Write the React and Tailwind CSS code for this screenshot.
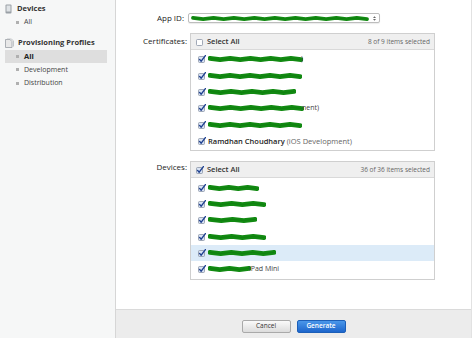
import React from "react";

const font = { fontFamily: '"Open Sans", "DejaVu Sans", sans-serif' };

function Scribble({ w, h = 6 }) {
  const pts = [];
  const n = Math.max(4, Math.floor(w / 10));
  for (let i = 0; i <= n; i++) {
    const x = 2 + ((w - 4) * i) / n;
    const y = h / 2 + (i % 2 === 0 ? -0.6 : 0.6);
    pts.push(`${x.toFixed(1)},${y.toFixed(1)}`);
  }
  return (
    <svg width={w} height={h} viewBox={`0 0 ${w} ${h}`} className="block">
      <polyline points={pts.join(" ")} fill="none" stroke="#128a12" strokeWidth={h - 1.2} strokeLinecap="round" strokeLinejoin="round" />
      <polyline points={pts.join(" ")} fill="none" stroke="#0b7a0b" strokeWidth={1} strokeLinecap="round" opacity="0.6" />
    </svg>
  );
}

function Check({ checked }) {
  return (
    <svg width="8" height="8" viewBox="0 0 8 8" className="block shrink-0">
      <rect x="0.5" y="1.5" width="6" height="6" rx="1" fill={checked ? "#d9e3f3" : "#fff"} stroke="#8a94a6" strokeWidth="0.8" />
      {checked && <path d="M1.6 4.4 L3.2 6.2 L7.4 0.6" fill="none" stroke="#1d3f8f" strokeWidth="1.4" strokeLinecap="round" strokeLinejoin="round" />}
    </svg>
  );
}

function Row({ scribble, text, pre, highlight }) {
  return (
    <div className={`h-[16.4px] flex items-center pl-[7px] ${highlight ? "bg-[#dcebf8]" : ""}`}>
      <Check checked />
      <div className="relative ml-[2px] flex items-center h-full">
        {pre ? (
          <span className="text-[7.5px] text-[#222]">{pre}</span>
        ) : (
          <>
            <Scribble w={scribble} />
            {text && <span className="text-[7px] text-[#444] -ml-[2px]">{text}</span>}
          </>
        )}
      </div>
    </div>
  );
}

function ListBox({ checked, count, rows }) {
  return (
    <div className="w-[245px] border border-[#cfcfcf] bg-white">
      <div className="h-[16px] bg-[#efefef] border-b border-[#d9d9d9] flex items-center pl-[5px] pr-[4px]">
        <Check checked={checked} />
        <span className="ml-[3px] text-[7.5px] text-[#333] font-semibold">Select All</span>
        <span className="ml-auto text-[6.5px] text-[#666]">{count}</span>
      </div>
      <div className="pt-[1px] pb-[1px]">
        {rows.map((r, i) => (
          <Row key={i} {...r} />
        ))}
      </div>
    </div>
  );
}

export default function App() {
  const certs = [
    { scribble: 95, text: ")" },
    { scribble: 94, text: "" },
    { scribble: 88 },
    { scribble: 96, text: "nent)" },
    { scribble: 94 },
    { pre: (<><span className="font-semibold">Ramdhan Choudhary</span> <span className="text-[#666]">(iOS Development)</span></>) },
  ];
  const devices = [
    { scribble: 51 },
    { scribble: 58 },
    { scribble: 49 },
    { scribble: 58 },
    { scribble: 68, highlight: true },
    { scribble: 43, text: "iPad Mini" },
  ];
  return (
    <div className="w-[474px] h-[338px] flex bg-white overflow-hidden text-[#333]" style={font}>
      {/* Sidebar */}
      <div className="w-[116px] shrink-0 bg-[#f6f7f7] border-r border-[#d6d6d6] pt-[4px] pl-[5px] pr-[8px]">
        <div className="flex items-center h-[10px]">
          <svg width="7" height="10" viewBox="0 0 7 10" className="block">
            <rect x="0.5" y="0.5" width="6" height="9" rx="1" fill="#9aa0a6" />
            <rect x="1.5" y="1.5" width="4" height="6" fill="#dfe3e6" />
          </svg>
          <span className="ml-[5px] text-[7.5px] font-bold text-[#333]">Devices</span>
        </div>
        <div className="flex items-center h-[13px] mt-[2px] pl-[11px]">
          <span className="w-[3px] h-[3px] bg-[#b0b0b0]" />
          <span className="ml-[5px] text-[7px] text-[#444]">All</span>
        </div>
        <div className="flex items-center h-[12px] mt-[8px]">
          <svg width="9" height="10" viewBox="0 0 9 10" className="block">
            <path d="M0.5 1.5 H5 L7 3.5 V9.5 H0.5 Z" fill="#e8e8e8" stroke="#9aa0a6" strokeWidth="0.8" />
            <path d="M2 1 H6.5 L8.5 3 V8.5" fill="none" stroke="#b5b9bd" strokeWidth="0.8" />
          </svg>
          <span className="ml-[4px] text-[7.5px] font-bold text-[#333]">Provisioning Profiles</span>
        </div>
        <div className="flex items-center h-[13px] mt-[1px] pl-[11px] bg-[#dedede]">
          <span className="w-[3px] h-[3px] bg-[#b0b0b0]" />
          <span className="ml-[5px] text-[7.5px] font-bold text-[#222]">All</span>
        </div>
        <div className="flex items-center h-[13.5px] pl-[11px]">
          <span className="w-[3px] h-[3px] bg-[#b0b0b0]" />
          <span className="ml-[5px] text-[7px] text-[#444]">Development</span>
        </div>
        <div className="flex items-center h-[13.5px] pl-[11px]">
          <span className="w-[3px] h-[3px] bg-[#b0b0b0]" />
          <span className="ml-[5px] text-[7px] text-[#444]">Distribution</span>
        </div>
      </div>

      {/* Main */}
      <div className="flex-1 flex flex-col border-r border-[#e2e2e2] mr-[2px]">
        <div className="flex-1">
          <div className="pt-[13px] flex">
            <div className="w-[72px] text-right pr-[4px] text-[8px] text-[#222] leading-[10px]">App ID:</div>
            <div className="w-[192px] h-[10px] border border-[#bdbdbd] rounded-[2px] bg-white flex items-center pl-[2px] pr-[2px] shadow-[0_1px_1px_rgba(0,0,0,0.08)]">
              <Scribble w={178} h={5} />
              <svg width="5" height="7" viewBox="0 0 5 7" className="ml-auto block">
                <path d="M1 3 L2.5 1.2 L4 3 Z M1 4 L2.5 5.8 L4 4 Z" fill="#666" />
              </svg>
            </div>
          </div>
          <div className="mt-[10px] flex">
            <div className="w-[74px] text-right pr-[3px] text-[8px] text-[#222] leading-[10px] pt-[3px]">Certificates:</div>
            <ListBox checked={false} count="8 of 9 items selected" rows={certs} />
          </div>
          <div className="mt-[10px] flex">
            <div className="w-[74px] text-right pr-[3px] text-[8px] text-[#222] leading-[10px] pt-[1px]">Devices:</div>
            <ListBox checked count="36 of 36 items selected" rows={devices} />
          </div>
        </div>
        <div className="h-[29px] shrink-0 bg-[#ececec] border-t border-[#dadada] flex items-center justify-center gap-[6px] pt-[4px]">
          <button className="w-[49px] h-[13px] rounded-[2px] border border-[#a9a9a9] bg-gradient-to-b from-[#fafafa] to-[#dcdcdc] text-[6.5px] text-[#333] flex items-center justify-center">
            Cancel
          </button>
          <button className="w-[49px] h-[13px] rounded-[2px] border border-[#1c5fb8] bg-gradient-to-b from-[#4a97ea] to-[#1d66cc] text-[6.5px] font-semibold text-white flex items-center justify-center">
            Generate
          </button>
        </div>
      </div>
    </div>
  );
}
